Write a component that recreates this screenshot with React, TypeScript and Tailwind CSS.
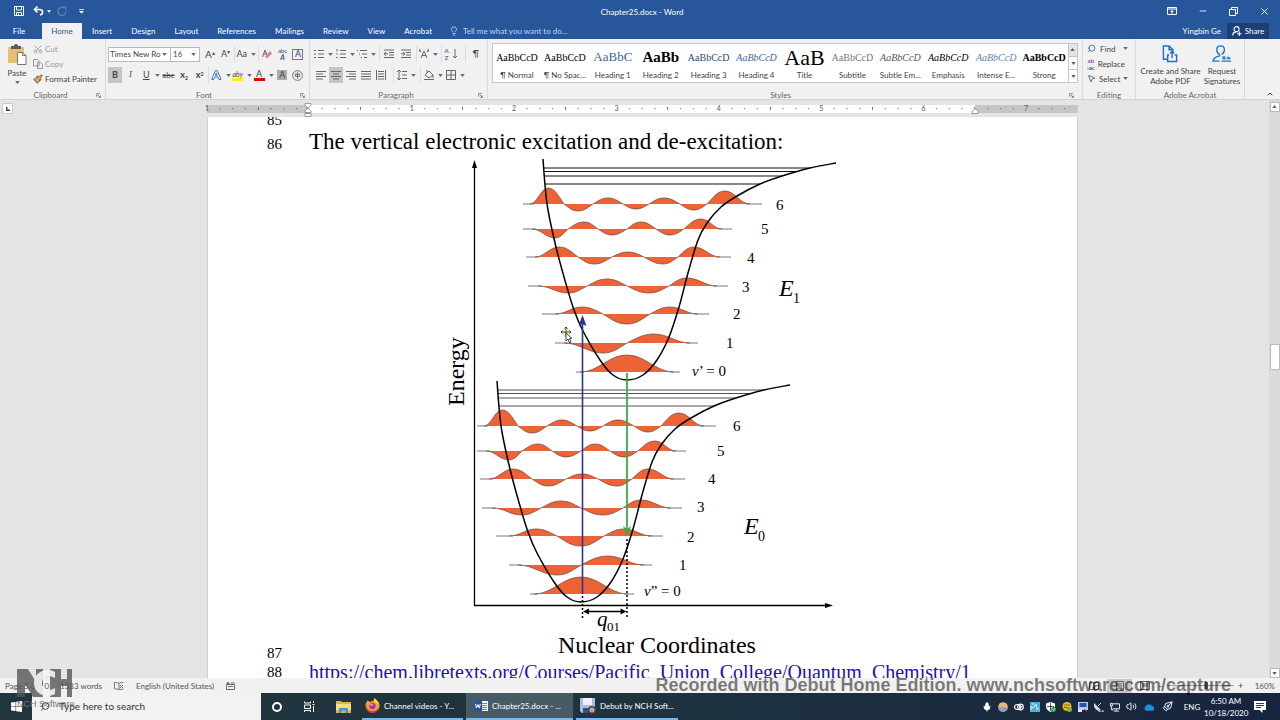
import type { ReactNode } from "react";
import {
  ChevronUp,
  Lightbulb,
  Mic,
  Minus,
  MousePointer2,
  Paintbrush,
  PenTool,
  Scissors,
  Search,
  Volume2,
  X,
} from "lucide-react";

const TABS_AFTER_HOME = [
  "Insert",
  "Design",
  "Layout",
  "References",
  "Mailings",
  "Review",
  "View",
  "Acrobat",
];

const STYLES = [
  { name: "¶ Normal", sample: "AaBbCcD", look: "text-[10px] text-black" },
  { name: "¶ No Spac...", sample: "AaBbCcD", look: "text-[10px] text-black" },
  { name: "Heading 1", sample: "AaBbC", look: "text-[13px] text-[#3d6496]" },
  { name: "Heading 2", sample: "AaBb", look: "text-[15px] font-bold text-black" },
  { name: "Heading 3", sample: "AaBbCcD", look: "text-[10px] text-[#2a4a75]" },
  { name: "Heading 4", sample: "AaBbCcD", look: "text-[10px] italic text-[#3d6496]" },
  { name: "Title", sample: "AaB", look: "text-[22px] text-black" },
  { name: "Subtitle", sample: "AaBbCcD", look: "text-[10px] text-[#777]" },
  { name: "Subtle Em...", sample: "AaBbCcD", look: "text-[10px] italic text-[#555]" },
  { name: "Emphasis", sample: "AaBbCcD", look: "text-[10px] italic text-black" },
  { name: "Intense E...", sample: "AaBbCcD", look: "text-[10px] italic text-[#5b83b5]" },
  { name: "Strong", sample: "AaBbCcD", look: "text-[10px] font-bold text-black" },
];

/* ---------- small pieces ---------- */

const Caret = () => (
  <svg viewBox="0 0 6 4" className="h-[3px] w-[5px] shrink-0" fill="#666">
    <path d="M0 0h6L3 4z" />
  </svg>
);

const Launcher = () => (
  <svg viewBox="0 0 8 8" className="size-[5px]" fill="none" stroke="#666" strokeWidth="1.2">
    <path d="M1 6V1h5M3 3l4 4M7 4v3H4" />
  </svg>
);

const Divider = () => <span className="h-4 w-px bg-[#dcdcdc]" />;

const Tool = ({
  label,
  active,
  children,
}: {
  label: string;
  active?: boolean;
  children: ReactNode;
}) => (
  <button
    type="button"
    aria-label={label}
    className={`flex h-4 min-w-[14px] items-center justify-center gap-1 text-[9px] ${
      active ? "bg-[#c5c5c5]" : ""
    }`}
  >
    {children}
  </button>
);

const Group = ({
  label,
  className,
  launcher,
  children,
}: {
  label: string;
  className: string;
  launcher?: boolean;
  children: ReactNode;
}) => (
  <section
    className={`flex flex-col border-r border-[#dadada] ${className}`}
    aria-label={label}
  >
    <div className="flex-1">{children}</div>
    <div className="flex h-[10px] items-center pt-[2px] pr-1 text-[8px] leading-[10px] text-[#666]">
      <span className="flex-1 text-center">{label}</span>
      {launcher && (
        <button type="button" aria-label={`${label} options`}>
          <Launcher />
        </button>
      )}
    </div>
  </section>
);

const Lines = ({ d }: { d: string }) => (
  <svg viewBox="0 0 10 10" className="size-[10px]" fill="none" stroke="#666" strokeWidth="1">
    <path d={d} />
  </svg>
);

/* ---------- title bar and tabs ---------- */

const TitleBar = () => (
  <header className="flex h-[22px] shrink-0 items-center bg-[#28569a] text-white">
    <div className="flex flex-1 items-center pl-[14px]">
      <button type="button" aria-label="Save">
        <svg viewBox="0 0 10 10" className="size-[10px]" fill="none" stroke="#fff">
          <path d="M.5.5h9v9h-9zM2.5.5v3.500h5v-3.500M2.500 9.500v-3h5v3M4.500 7.500v2" />
        </svg>
      </button>
      <button type="button" aria-label="Undo" className="ml-[9px] flex items-center gap-[3px]">
        <svg viewBox="0 0 11 10" className="h-[10px] w-[11px]" fill="none" stroke="#fff" strokeWidth="1.600">
          <path d="M4.500.5L1.500 3.500l3 3M1.500 3.500h5c4 0 4 5 .5 5.500" />
        </svg>
        <svg viewBox="0 0 6 4" className="h-[3px] w-[4px]" fill="#fff">
          <path d="M0 0h6L3 4z" />
        </svg>
      </button>
      <button type="button" aria-label="Repeat" className="ml-[6px]">
        <svg viewBox="0 0 10 10" className="size-[10px]" fill="none" stroke="#5a80b8" strokeWidth="1.300">
          <path d="M7 2A4 4 0 1 0 9 5.500M5.500 .8h3v3" />
        </svg>
      </button>
      <button type="button" aria-label="Customize toolbar" className="ml-[12px]">
        <svg viewBox="0 0 6 7" className="h-[6px] w-[5px]" fill="#fff">
          <path d="M0 1h6v1H0zM0 3.500h6L3 6.500z" />
        </svg>
      </button>
    </div>
    <h1 className="pt-[2px] text-[8px] leading-none">Chapter25.docx - Word</h1>
    <div className="flex flex-1 items-center justify-end gap-[21px] pr-[10px]">
      <button type="button" aria-label="Ribbon display options">
        <svg viewBox="0 0 10 8" className="h-[8px] w-[10px]" fill="none" stroke="#fff">
          <path d="M.5.5h9v7h-9zM.5 2h9M5 7V3.500M3.500 5L5 3.500 6.500 5" />
        </svg>
      </button>
      <button type="button" aria-label="Minimize">
        <Minus className="size-[10px]" />
      </button>
      <button type="button" aria-label="Restore">
        <svg viewBox="0 0 9 9" className="size-[9px]" fill="none" stroke="#fff">
          <path d="M.5 2.500h6v6h-6zM2.500 2V.5h6v6H7" />
        </svg>
      </button>
      <button type="button" aria-label="Close">
        <X className="size-[11px]" />
      </button>
    </div>
  </header>
);

const Tabs = () => (
  <nav className="flex h-[17px] shrink-0 items-stretch bg-[#28569a] text-[8px] text-white">
    <button type="button" className="mr-[4px] w-[38px]">File</button>
    <button type="button" className="mt-px w-10 bg-[#f1f1f1] text-[#28569a]">Home</button>
    {TABS_AFTER_HOME.map((tab) => (
      <button type="button" key={tab} className="pr-[9px] pl-[10px]">
        {tab}
      </button>
    ))}
    <button type="button" className="ml-2 flex items-center gap-1 text-[#c3d3ea]">
      <Lightbulb className="size-[10px]" />
      Tell me what you want to do...
    </button>
    <div className="flex flex-1 items-center justify-end gap-[6px] pr-[11px]">
      <span>Yingbin Ge</span>
      <button type="button" className="flex h-4 w-[42px] items-center justify-center gap-[3px] bg-[#1a4076]">
        <svg viewBox="0 0 11 11" className="size-[10px]" fill="none" stroke="#fff" strokeWidth="1.200">
          <circle cx="5" cy="3.500" r="2.800" />
          <path d="M.8 10.500c0-2.500 1.500-4 4-4M8 6v5M5.500 8.500h5" />
        </svg>
        Share
      </button>
    </div>
  </nav>
);

/* ---------- ribbon ---------- */

const ClipboardGroup = () => (
  <Group label="Clipboard" className="w-[106px] pl-[5px]" launcher>
    <div className="flex">
      <button type="button" className="flex w-[24px] flex-col items-center gap-[2px] pt-[5px]">
        <svg viewBox="0 0 20 21" className="h-[21px] w-[20px]">
          <path d="M1 3h16v16H1z" fill="#e9bd72" />
          <path d="M4 2h3a2 2 0 0 1 4 0h3v3H4z" fill="#5c5c5c" />
          <path d="M10.500 8.500h5l3.500 3v9h-8.500z" fill="#fff" stroke="#777" />
          <path d="M15.500 8.500v3H19" fill="none" stroke="#777" />
        </svg>
        <span className="leading-[12px]">Paste</span>
        <Caret />
      </button>
      <div className="ml-1 flex flex-col pt-[2px]">
        <button type="button" className="flex h-[15px] items-center gap-[2px] text-[#999]">
          <Scissors className="size-[10px] -rotate-90" />
          Cut
        </button>
        <button type="button" className="flex h-[15px] items-center gap-[2px] text-[#999]">
          <svg viewBox="0 0 10 10" className="size-[10px]" fill="#f1f1f1" stroke="#999">
            <path d="M.5.5h4l1.500 1.500v5H.5zM4.500 3.500h3l2 2v4h-5z" />
          </svg>
          Copy
        </button>
        <button type="button" className="flex h-[15px] items-center gap-[2px] whitespace-nowrap">
          <Paintbrush className="size-[10px] fill-[#e0ab58] text-[#5a4a38]" />
          Format Painter
        </button>
      </div>
    </div>
  </Group>
);

const FontGroup = () => (
  <Group label="Font" className="w-[204px] pl-[2px]" launcher>
    <div className="flex h-[29px] items-center pt-px">
      <label className="flex h-[15px] w-[63px] items-center border border-[#bbb] bg-white pr-[3px]">
        <input aria-label="Font name" defaultValue="Times New Ro" className="w-full min-w-0 pl-[1px] text-[8px] outline-none" />
        <Caret />
      </label>
      <label className="flex h-[15px] w-[29px] items-center border border-l-0 border-[#bbb] bg-white pr-[3px]">
        <input aria-label="Font size" defaultValue="16" className="w-full min-w-0 pl-[2px] text-[8px] outline-none" />
        <Caret />
      </label>
      <div className="flex flex-1 items-center justify-between pr-[4px] pl-[3px]">
        <Tool label="Grow font">
          <span className="text-[10px]">A<sup className="text-[6px] text-[#28569a]">▴</sup></span>
        </Tool>
        <Tool label="Shrink font">
          <span className="text-[9px]">A<sup className="text-[6px] text-[#28569a]">▾</sup></span>
        </Tool>
        <Divider />
        <Tool label="Change case">Aa<Caret /></Tool>
        <Divider />
        <Tool label="Clear formatting">
          <svg viewBox="0 0 10 10" className="size-[10px]">
            <path d="M.5 8L3 1l2 5M1.500 5h3" fill="none" stroke="#666" />
            <path d="M3 7.500L8 2l2 2.500L5 9.500z" fill="#e27f93" />
          </svg>
        </Tool>
        <Tool label="Phonetic guide">
          <span className="flex flex-col items-center text-[6px] leading-[6px]">
            abc
            <b className="text-[7px] leading-[7px] text-[#28569a] italic">A</b>
          </span>
        </Tool>
        <Tool label="Character border">
          <span className="flex size-[11px] items-center justify-center border border-[#5d7eab]">A</span>
        </Tool>
      </div>
    </div>
    <div className="flex h-[14px] items-center justify-between pr-[4px]">
      <Tool label="Bold" active><b>B</b></Tool>
      <Tool label="Italic"><i className="font-serif">I</i></Tool>
      <Tool label="Underline"><u>U</u></Tool>
      <Caret />
      <Tool label="Strikethrough"><s className="text-[8px]">abc</s></Tool>
      <Tool label="Subscript"><b>x<sub className="text-[5px]">2</sub></b></Tool>
      <Tool label="Superscript"><b>x<sup className="text-[5px]">2</sup></b></Tool>
      <Divider />
      <Tool label="Text effects">
        <svg viewBox="0 0 11 10" className="h-[10px] w-[11px]" fill="#fff" stroke="#3d73bd">
          <path d="M.7 9.500L4.300.7h2l3.700 8.800H8L7 7H3.700l-1 2.500zM4.300 5.300h2L5.300 2.800z" />
        </svg>
        <Caret />
      </Tool>
      <Tool label="Highlight">
        <span className="border-b-[3px] border-[#fff200] text-[7px] leading-[8px] italic">aby</span>
        <Caret />
      </Tool>
      <Tool label="Font color">
        <span className="w-[11px] border-b-[3px] border-[#e60000] leading-[8px]">A</span>
        <Caret />
      </Tool>
      <Tool label="Character shading">
        <span className="flex size-[10px] items-center justify-center bg-[#aaa]">A</span>
      </Tool>
      <Tool label="Enclose characters">
        <svg viewBox="0 0 12 12" className="size-[11px]" fill="none" stroke="#666">
          <circle cx="6" cy="6" r="5.300" />
          <path d="M3 4.500h6M6 2.500v7M3.500 7h5M4 4.500v2M8 4.500v2" />
        </svg>
      </Tool>
    </div>
  </Group>
);

const ParagraphGroup = () => (
  <Group label="Paragraph" className="w-[178px] pl-1" launcher>
    <div className="flex h-[29px] items-center justify-between pt-px pr-1">
      <Tool label="Bullets"><Lines d="M0 1.500h2M0 5h2M0 8.500h2M4 1.500h6M4 5h6M4 8.500h6" /><Caret /></Tool>
      <Tool label="Numbering"><Lines d="M1 0v2.500M0 5h1.500M0 8.500h1.500M4 1.500h6M4 5h6M4 8.500h6" /><Caret /></Tool>
      <Tool label="Multilevel list"><Lines d="M0 1.500h1M3 1.500h7M2 5h1M5 5h5M4 8.500h1M7 8.500h3" /><Caret /></Tool>
      <Divider />
      <Tool label="Decrease indent"><Lines d="M0 1h10M5 3.500h5M5 6h5M0 8.500h10M4 4.800H0M2 3L0 4.800l2 2" /></Tool>
      <Tool label="Increase indent"><Lines d="M0 1h10M5 3.500h5M5 6h5M0 8.500h10M0 4.800h4M2 3l2 1.800-2 2" /></Tool>
      <Divider />
      <Tool label="Asian layout"><Lines d="M2 9L5 2l3 7M3 6.500h4M0 1l2 2M10 1L8 3M0 3V1h2M10 3V1H8" /><Caret /></Tool>
      <Divider />
      <Tool label="Sort">
        <span className="flex flex-col text-[6px] leading-[7px] font-bold">
          <span className="text-[#3d73bd]">A</span>
          <span className="text-[#8a5a9c]">Z</span>
        </span>
        <Lines d="M2 0v9M0 7l2 2 2-2" />
      </Tool>
      <Divider />
      <Tool label="Show marks">¶</Tool>
    </div>
    <div className="flex h-[14px] items-center gap-[1px] pr-[22px]">
      <Tool label="Align left"><Lines d="M0 1.500h10M0 4h7M0 6.500h10M0 9h7" /></Tool>
      <Tool label="Center" active><Lines d="M0 1.500h10M2 4h6M0 6.500h10M2 9h6" /></Tool>
      <Tool label="Align right"><Lines d="M0 1.500h10M3 4h7M0 6.500h10M3 9h7" /></Tool>
      <Tool label="Justify"><Lines d="M0 1.500h10M0 4h10M0 6.500h10M0 9h10" /></Tool>
      <Tool label="Distribute"><Lines d="M.5 0v10M9.500 0v10M2 1.500h6M2 4h6M2 6.500h6M2 9h6" /></Tool>
      <div className="flex flex-1 items-center justify-between pl-1">
        <Divider />
        <Tool label="Line spacing"><Lines d="M2 0v10M0 2l2-2 2 2M0 8l2 2 2-2M5 1.500h5M5 5h5M5 8.500h5" /><Caret /></Tool>
        <Divider />
        <Tool label="Shading"><Lines d="M1 5l4-4 4 4-4 3zM3 3V0M9 5v3M0 9.500h10" /><Caret /></Tool>
        <Tool label="Borders"><Lines d="M.5.5h9v9h-9zM5 0v10M0 5h10" /><Caret /></Tool>
      </div>
    </div>
  </Group>
);

const StylesGroup = () => (
  <Group label="Styles" className="min-w-0 flex-1 px-1" launcher>
    <div className="mt-1 flex h-10 border border-[#c6c6c6] bg-white">
      {STYLES.map((style) => (
        <button
          type="button"
          key={style.name}
          className="flex min-w-0 flex-1 flex-col items-center px-[2px] whitespace-nowrap"
        >
          <span
            className={`flex h-[26px] items-center font-['Liberation_Serif',serif] ${style.look}`}
          >
            {style.sample}
          </span>
          <span className="text-[8px] leading-[10px]">{style.name}</span>
        </button>
      ))}
      <div className="flex w-[9px] shrink-0 flex-col border-l border-[#c6c6c6]">
        <button type="button" aria-label="Scroll styles up" className="flex flex-1 rotate-180 items-center justify-center bg-[#e4e4e4]"><Caret /></button>
        <button type="button" aria-label="Scroll styles down" className="flex flex-1 items-center justify-center border-y border-[#c6c6c6]"><Caret /></button>
        <button type="button" aria-label="More styles" className="flex flex-1 items-center justify-center"><Caret /></button>
      </div>
    </div>
  </Group>
);

const EditingGroup = () => (
  <Group label="Editing" className="w-[53px] pl-1">
    <div className="flex flex-col pt-[2px]">
      <button type="button" className="flex h-[15px] items-center gap-1">
        <Search className="size-[9px] -scale-x-100 text-[#28569a]" />
        Find
        <span className="ml-1"><Caret /></span>
      </button>
      <button type="button" className="flex h-[15px] items-center gap-[3px]">
        <span className="flex flex-col text-[6px] leading-[7px] font-bold">
          <span className="text-[#8a5a9c]">ab</span>
          <span className="text-[#28569a]">›ac</span>
        </span>
        Replace
      </button>
      <button type="button" className="flex h-[15px] items-center gap-[3px]">
        <MousePointer2 className="size-[9px]" />
        Select
        <Caret />
      </button>
    </div>
  </Group>
);

const AcrobatGroup = () => (
  <Group label="Adobe Acrobat" className="w-[109px] pl-1">
    <div className="flex gap-[2px] leading-[10px]">
      <button type="button" className="flex w-[61px] flex-col items-center pt-[6px] whitespace-nowrap">
        <svg viewBox="0 0 17 19" className="mb-[3px] h-[18px] w-[17px]" fill="none" stroke="#1b72c8" strokeWidth="1.500">
          <path d="M5 15H1V1h6l4 4v3M7 1v4h4M7 10.500H5.500v7H15v-7h-2M10.200 14V7M8 9l2.200-2.200L12.500 9" />
        </svg>
        Create and Share
        <br />
        Adobe PDF
      </button>
      <button type="button" className="flex w-[38px] flex-col items-center pt-[6px]">
        <svg viewBox="0 0 21 19" className="mb-[3px] h-[18px] w-[20px]" fill="none" stroke="#1b72c8" strokeWidth="1.400">
          <path d="M8 10c-2-1-3-3-3-5 0-2.500 1.500-4 4-4s4 1.500 4 4c0 2-1 4-3 5M8 10v1.500c-4 1-7 2-7 5.500h7M10 17h10M11 12l3 3M14 12l-3 3M15.500 14.500l1.500-1.500 1 1.500 1.500-1" />
        </svg>
        Request
        <br />
        Signatures
      </button>
    </div>
  </Group>
);

const Ribbon = () => (
  <div className="flex h-[61px] shrink-0 border-b border-[#d2d2d2] bg-[#f1f1f1] text-[8px] text-[#444]">
    <ClipboardGroup />
    <FontGroup />
    <ParagraphGroup />
    <StylesGroup />
    <EditingGroup />
    <AcrobatGroup />
    <div className="flex w-[35px] items-end justify-center pb-[1px] pl-[14px]">
      <button type="button" aria-label="Collapse the ribbon">
        <ChevronUp className="size-[8px]" strokeWidth={3} />
      </button>
    </div>
  </div>
);

/* ---------- ruler ---------- */

const RULER_TICKS = Array.from({ length: 69 }, (_, i) => i);

const tickMark = (i: number) => {
  if (i % 8 === 0) return i === 8 || i === 68 ? "" : String(Math.abs(i / 8 - 1));
  if (i === 68) return "";
  return i % 4 === 0 ? <i className="h-[3px] w-px shrink-0 bg-[#777]" /> : "·";
};

const Ruler = () => (
  <div className="flex h-[17px] shrink-0 items-center">
    <div className="w-4 pl-[2px]">
      <button
        type="button"
        aria-label="Tab selector"
        className="flex size-[11px] items-center justify-center border border-[#ccc] bg-white"
      >
        <svg viewBox="0 0 4 4" className="size-1" fill="none" stroke="#444" strokeWidth="1.500">
          <path d="M.7 0v3.300H4" />
        </svg>
      </button>
    </div>
    <div className="flex flex-1 justify-center">
      <div className="relative flex h-2 w-[871px] bg-[linear-gradient(90deg,#c6c6c6_102px,#fff_102px,#fff_768px,#c6c6c6_768px)]">
        <div className="flex flex-1 items-center justify-between text-[7px] leading-none text-[#555]">
          {RULER_TICKS.map((i) => (
            <span key={i} className="flex w-0 justify-center">{tickMark(i)}</span>
          ))}
        </div>
        <svg viewBox="0 0 8 14" className="absolute -top-[2px] left-[97px] h-[14px] w-2" fill="#fff" stroke="#999">
          <path d="M1 .5h6v2L4 5 1 2.500zM4 5l3 3v1.500H1V8zM1 10.500h6v3H1z" />
        </svg>
        <svg viewBox="0 0 8 6" className="absolute top-[3px] left-[764px] h-[6px] w-2" fill="#fff" stroke="#999">
          <path d="M4 .5l3 3v2H1v-2z" />
        </svg>
      </div>
    </div>
  </div>
);

/* ---------- energy diagram ---------- */

type Level = {
  y: number;
  line: [number, number];
  // alternating node x and extremum [x, offset], starting and ending on a node
  nodes: number[];
  peaks: [number, number][];
};

const LEVELS: Level[] = [
  { y: 372, line: [576, 680], nodes: [580, 674], peaks: [[627, -17]] },
  { y: 343, line: [555, 698], nodes: [564, 627, 690], peaks: [[603, 10], [654, -9]] },
  { y: 314, line: [542, 709], nodes: [555, 603, 650, 698], peaks: [[582, -7], [627, 10], [670, -7]] },
  { y: 286, line: [528, 728], nodes: [538, 587, 627, 669, 717], peaks: [[568, 7], [607, -7], [649, 7], [687, -8]] },
  { y: 257, line: [526, 731], nodes: [535, 578, 612, 644, 678, 720], peaks: [[559, -10], [594, 7], [628, -5], [663, 7], [694, -10]] },
  { y: 229, line: [523, 732], nodes: [532, 568, 598, 627, 656, 684, 722], peaks: [[555, 9], [584, -7], [612, 6], [641, -7], [670, 6], [701, -10]] },
  { y: 204, line: [523, 762], nodes: [530, 564, 593, 623, 649, 680, 707, 750], peaks: [[548, -16], [578, 7], [608, -6], [636, 5], [664, -6], [694, 6], [725, -13]] },
];

const wavePath = ({ y, nodes, peaks }: Level) => {
  let d = `M${nodes[0]} ${y}`;
  peaks.forEach(([px, h], i) => {
    const a = nodes[i];
    const b = nodes[i + 1];
    const left = px - a;
    const right = b - px;
    // outer lobes fade out along the level line, inner ones cross it
    const rise = i === 0 ? 0 : h * 0.6;
    const fall = i === peaks.length - 1 ? 0 : h * 0.6;
    d += `C${a + left * 0.4} ${y + rise} ${px - left * 0.4} ${y + h} ${px} ${y + h}`;
    d += `C${px + right * 0.4} ${y + h} ${b - right * 0.4} ${y + fall} ${b} ${y}`;
  });
  return d;
};

const WELL: [number, number][] = [
  [543, 159], [545, 185], [548, 210], [556, 247], [566, 284], [574, 310], [583, 331],
  [600, 360], [613, 375], [627, 380], [643, 375], [657, 360], [669, 337], [679, 307],
  [688, 273], [698, 240], [707, 223], [721, 207], [737, 196], [760, 184], [782, 176],
  [810, 168], [836, 163],
];

const smooth = (pts: [number, number][]) =>
  pts.slice(1).reduce((d, p, i) => {
    const p0 = pts[i - 1] ?? pts[i];
    const p1 = pts[i];
    const p3 = pts[i + 2] ?? p;
    return `${d}C${p1[0] + (p[0] - p0[0]) / 6} ${p1[1] + (p[1] - p0[1]) / 6} ${
      p[0] - (p3[0] - p1[0]) / 6
    } ${p[1] - (p3[1] - p1[1]) / 6} ${p[0]} ${p[1]}`;
  }, `M${pts[0][0]} ${pts[0][1]}`);

const Well = ({ limitColor }: { limitColor: string }) => (
  <>
    <path
      d="M544 168H810M544 171.500H798M544 176H782M545 184H760"
      fill="none"
      stroke={limitColor}
    />
    {LEVELS.map((level) => (
      <g key={level.y}>
        <path
          d={`M${level.line[0]} ${level.y}H${level.nodes[0] + 4}M${
            level.nodes[level.nodes.length - 1] - 4
          } ${level.y}H${level.line[1]}`}
          stroke="#555"
          strokeWidth="0.800"
        />
        <path d={`${wavePath(level)}Z`} fill="#ee6336" />
        <path d={wavePath(level)} fill="none" stroke="#664438" strokeWidth="0.700" />
      </g>
    ))}
    <path d={smooth(WELL)} fill="none" stroke="#000" strokeWidth="1.500" />
  </>
);

const LABELS: [string, number, number][] = [
  ["6", 776, 210], ["5", 761, 234], ["4", 747, 263], ["3", 742, 292], ["2", 733, 319], ["1", 726, 348],
  ["6", 733, 431], ["5", 717, 456], ["4", 708, 484], ["3", 697, 512], ["2", 687, 542], ["1", 679, 570],
];

const EnergyDiagram = () => (
  <svg
    viewBox="440 155 410 505"
    className="h-[505px] w-[410px] font-['Liberation_Serif',serif]"
    role="img"
    aria-label="Vertical electronic excitation and de-excitation"
  >
    <path d="M474.500 164V605.500H828" fill="none" stroke="#000" strokeWidth="1.300" />
    <path d="M474.500 160l2.500 8h-5zM833 605.500l-8 2.500v-5z" />
    <Well limitColor="#111" />
    <g transform="translate(-46 222)">
      <Well limitColor="#555060" />
    </g>
    <path d="M582.500 594V318" stroke="#2b3590" strokeWidth="1.600" />
    <path d="M582.500 315l4 11-4-2-4 2z" fill="#2b3590" />
    <path d="M627 373v160" stroke="#3aab47" strokeWidth="1.800" />
    <path d="M627 537l-4-11 4 3 4-3z" fill="#3aab47" />
    <path d="M582.500 596v22M627 539v79" stroke="#000" strokeWidth="1.500" strokeDasharray="2 2" />
    <path d="M586 611.500h38" stroke="#000" strokeWidth="1.500" />
    <path d="M583 611.500l6-3v6zM626.500 611.500l-6-3v6z" />
    <g fontSize="15">
      {LABELS.map(([text, x, y]) => (
        <text key={`${x}-${y}`} x={x} y={y}>{text}</text>
      ))}
      <text x="692" y="376"><tspan fontStyle="italic">v</tspan>’ = 0</text>
      <text x="644" y="596"><tspan fontStyle="italic">v</tspan>” = 0</text>
    </g>
    <g fontSize="24" fontStyle="italic">
      <text x="779" y="296">E</text>
      <text x="744" y="534">E</text>
      <text x="597" y="626" fontSize="21">q</text>
    </g>
    <g fontSize="14">
      <text x="793" y="303">1</text>
      <text x="758" y="541">0</text>
      <text x="607" y="631" fontSize="13">01</text>
    </g>
    <text transform="translate(464 406) rotate(-90)" fontSize="24">Energy</text>
    <text x="558" y="653" fontSize="24">Nuclear Coordinates</text>
    <g stroke="#333" fill="#fff" strokeWidth="0.900">
      <circle cx="566" cy="332" r="4.500" fill="#f4f0c4" stroke="none" />
      <path d="M561 332h10M566 327v10M562.500 330.500l-1.500 1.500 1.500 1.500M569.500 330.500l1.500 1.500-1.500 1.500M564.500 328.500l1.500-1.500 1.500 1.500" fill="none" />
      <path d="M566 333v8l2-2 1.500 4 1.500-.7-1.500-3.800h2.500z" />
    </g>
  </svg>
);

/* ---------- document ---------- */

const Line = ({
  n,
  className,
  children,
}: {
  n: number;
  className: string;
  children?: ReactNode;
}) => (
  <div className={`flex ${className}`}>
    <span className="w-[42px] shrink-0 text-[15px] leading-[14px]">{n}</span>
    {children}
  </div>
);

const DocumentPage = () => (
  <div className="flex min-h-0 flex-1 justify-center overflow-hidden pl-4">
    <article className="w-[871px] border-x border-[#d0d0d0] bg-white pl-[59px] font-['Liberation_Serif',serif] text-black">
      <Line n={85} className="h-[10px] items-end overflow-hidden" />
      <Line n={86} className="h-7 items-baseline">
        <p className="text-[23px] leading-[30px]">
          The vertical electronic excitation and de-excitation:
        </p>
      </Line>
      <Line n={87} className="items-end">
        <div className="pl-[131px]">
          <EnergyDiagram />
        </div>
      </Line>
      <Line n={88} className="h-6 items-center">
        <a
          href="https://chem.libretexts.org/Courses/Pacific_Union_College/Quantum_Chemistry/1"
          className="text-[20px] whitespace-nowrap text-[#1a10b8]"
        >
          https://chem.libretexts.org/Courses/Pacific_Union_College/Quantum_Chemistry/1
        </a>
      </Line>
    </article>
  </div>
);

const ScrollBar = () => (
  <div className="flex w-[11px] flex-col items-center bg-[#dadada] pt-[2px]">
    <button type="button" aria-label="Scroll up" className="flex size-[10px] rotate-180 items-center justify-center border border-[#bbb] bg-white"><Caret /></button>
    <div className="flex-[231]" />
    <div className="h-[26px] w-[10px] border border-[#bbb] bg-white" />
    <div className="flex-[297]" />
    <button type="button" aria-label="Scroll down" className="flex size-[10px] items-center justify-center border border-[#bbb] bg-white"><Caret /></button>
  </div>
);

/* ---------- status bar and task bar ---------- */

const StatusBar = () => (
  <footer className="flex h-[15px] shrink-0 items-center bg-[#f1f1f1] pr-[5px] pl-[5px] text-[8px] text-[#555]">
    <span className="w-[55px]">Page 5 of 10</span>
    <span>1333 words</span>
    <svg viewBox="0 0 10 8" className="ml-3 h-2 w-[10px]" fill="none" stroke="#777">
      <path d="M5 1.500C4 .5 2 .5.5.5v6.500c1.500 0 3.500 0 4.500.7V1.500M5 1.500c1-1 2-1 4.500-1M6 3l3 3M9 3L6 6M5 7.700l4.500-.7" />
    </svg>
    <span className="ml-3">English (United States)</span>
    <svg viewBox="0 0 9 8" className="ml-3 h-2 w-[9px]" fill="none" stroke="#666">
      <path d="M.5 2.500h8v5h-8zM2 4.500h5M5 1h3.500" />
      <circle cx="2" cy="1.500" r="1" fill="#666" />
    </svg>
    <div className="flex flex-1 items-center justify-end">
      <button type="button" aria-label="Read mode" className="px-2"><Lines d="M.5 1.500h4v7h-4zM5.500 1.500h4v7h-4z" /></button>
      <button type="button" aria-label="Print layout" className="flex h-[14px] w-[25px] items-center justify-center bg-[#c8c8c8]"><Lines d="M1.500.5h7v9h-7zM3 3h4M3 5h4M3 7h4" /></button>
      <button type="button" aria-label="Web layout" className="px-2"><Lines d="M.5.5h9v8h-9zM2 3h6M2 5h6" /></button>
      <button type="button" aria-label="Zoom out">−</button>
      <input type="range" aria-label="Zoom" min={10} max={210} defaultValue={128} className="mx-1 h-[7px] w-[67px] appearance-none bg-[linear-gradient(#999,#999)] bg-[length:100%_1px] bg-center bg-no-repeat [&::-webkit-slider-thumb]:h-[7px] [&::-webkit-slider-thumb]:w-[3px] [&::-webkit-slider-thumb]:appearance-none [&::-webkit-slider-thumb]:bg-[#555]" />
      <button type="button" aria-label="Zoom in" className="text-[10px]">+</button>
      <span className="ml-[11px]">160%</span>
    </div>
  </footer>
);

const TaskButton = ({
  label,
  className,
  icon,
}: {
  label: string;
  className: string;
  icon: ReactNode;
}) => (
  <button
    type="button"
    className={`mr-[3px] flex h-full items-center gap-1 border-b-2 border-[#76b9ed] whitespace-nowrap ${className}`}
  >
    {icon}
    {label}
  </button>
);

const Tray = () => (
  <div className="flex items-center gap-[6px]">
    <Mic className="size-[10px] fill-white" />
    <svg viewBox="0 0 10 10" className="size-[10px]"><circle cx="5" cy="5" r="4.800" fill="#e8b777" /><path d="M.3 6a4.800 4.800 0 0 0 9.400 0Q5 4 .3 6z" fill="#8e9fc4" /></svg>
    <svg viewBox="0 0 10 10" className="size-[10px]" fill="none" stroke="#fff" strokeWidth="1.200"><ellipse cx="3.500" cy="5" rx="3" ry="2.500" /><circle cx="6.500" cy="5" r="2.800" /><circle cx="6.500" cy="5" r=".8" /></svg>
    <svg viewBox="0 0 10 10" className="size-[10px]"><path d="M0 0h10v10H0z" fill="#53abd8" /><path d="M1 8V4l2 2 3-4 1 5h2M2 2h2" fill="none" stroke="#d7f0fb" /></svg>
    <svg viewBox="0 0 10 10" className="size-[10px]"><path d="M4.500 0L9 1.500v3C9 7 7 9 4.500 10 2 9 0 7 0 4.500v-3z" fill="#fff" /><path d="M4.500 1v8M1 4.500h7" stroke="#17243c" strokeWidth=".8" /><circle cx="7.500" cy="7.500" r="2.500" fill="#27a052" /><path d="M6.300 7.500l1 1 1.500-2" fill="none" stroke="#fff" strokeWidth=".7" /></svg>
    <svg viewBox="0 0 10 10" className="size-[10px]"><circle cx="5" cy="4.500" r="4.500" fill="#e9b730" /><path d="M2 3h6M2 5.500h4" stroke="#8c6712" /><circle cx="7.500" cy="7.500" r="2.500" fill="#7ab83a" /></svg>
    <svg viewBox="0 0 10 10" className="size-[10px]"><path d="M0 0h10v8H0z" fill="#b9c8e8" /><path d="M1.500 1h7v4h-7z" fill="#2a4fae" /><path d="M2 7h2v3H0V8z" fill="#dfe6f5" /><path d="M6 7l3 3" stroke="#c33" /></svg>
    <svg viewBox="0 0 10 10" className="size-[10px]"><path d="M0 1l7 7c-4 2-8-2-7-7z" fill="#ddd" /><path d="M4 4l3-3M5 8v2h4V8" stroke="#ddd" fill="none" /></svg>
    <svg viewBox="0 0 11 10" className="size-[10px]" fill="none" stroke="#fff"><path d="M3 1.500h7.500v5.500H3M7 7v2M4 9.500h6M.5 1h2v3h-2zM1.500 4v4h2" /></svg>
    <Volume2 className="size-[11px]" />
    <svg viewBox="0 0 12 8" className="h-[8px] w-[11px]"><path d="M3 8a3 3 0 0 1 0-5 4 4 0 0 1 7 0 2.500 2.500 0 0 1 0 5z" fill="#1c8fe0" /></svg>
    <PenTool className="ml-[2px] size-[11px] rotate-90" />
  </div>
);

const TaskBar = () => (
  <div className="flex h-[27px] shrink-0 items-center bg-[linear-gradient(90deg,#22363f,#1f333f_50%,#17243f)] text-[8px] text-white">
    <button type="button" aria-label="Start" className="flex h-full w-8 items-center justify-center">
      <svg viewBox="0 0 12 12" className="size-[11px]" fill="#fff">
        <path d="M0 1.700l5-.7v4.700H0zM5.600.9L12 0v5.700H5.600zM0 6.300h5V11l-5-.7zM5.600 6.300H12V12l-6.400-.9z" />
      </svg>
    </button>
    <label className="flex h-full w-[229px] items-center gap-[9px] bg-[#f2f2f2] pl-2 text-[#222]">
      <Search className="size-[11px] -scale-x-100" />
      <input aria-label="Search" placeholder="Type here to search" className="w-full text-[10px] outline-none placeholder:text-[#333]" />
    </label>
    <button type="button" aria-label="Cortana" className="flex w-8 justify-center">
      <span className="size-[10px] rounded-full border-2 border-white" />
    </button>
    <button type="button" aria-label="Task view" className="flex w-8 justify-center">
      <svg viewBox="0 0 11 11" className="size-[11px]" fill="none" stroke="#fff">
        <path d="M.5.5v1.500h6V.5M.5 4h6v3.500h-6zM.5 11V9.500h6V11M9.500 0v2M9.500 5v6M8.500 3.500h2" />
      </svg>
    </button>
    <button type="button" aria-label="File Explorer" className="flex w-[37px] justify-center">
      <svg viewBox="0 0 15 13" className="h-[13px] w-[15px]">
        <path d="M0 1h5l1 1h9v11H0z" fill="#e8b240" />
        <path d="M0 4h15v6H0z" fill="#fbdc83" />
        <path d="M3 13V8h9v5H9.500v-2.500h-4V13z" fill="#3c98d8" />
      </svg>
    </button>
    <TaskButton
      label="Channel videos - Y..."
      className="w-[101px] pl-[3px]"
      icon={
        <svg viewBox="0 0 16 16" className="size-[15px] shrink-0">
          <path d="M10 0c2 2 5 4 5.500 8A7.500 7.500 0 0 1 .5 8.500C.5 6 1.500 4 3 2.500c.5 1 1 1.500 2 1.500 2 0 5-1 5-4z" fill="#ff9a2b" />
          <path d="M10 0c2 2 5 4 5.500 8-1-2-3-3-5-3.500C9 4 10 2 10 0z" fill="#ffd93b" />
          <path d="M1 6c0 5 3 8 7 8s5-2 6-3c0 3-3 5-6 5C4 16 0 12 1 6z" fill="#e8294c" />
          <circle cx="8" cy="8.500" r="3.300" fill="#8a35d0" />
          <path d="M5 6l4 1-2 2z" fill="#ffb52e" />
        </svg>
      }
    />
    <TaskButton
      label="Chapter25.docx - ..."
      className="w-[107px] bg-[#475b67] pl-2"
      icon={
        <svg viewBox="0 0 14 12" className="h-[12px] w-[14px] shrink-0">
          <path d="M6 1h8v10H6z" fill="#fff" />
          <path d="M8 3.500h5M8 5.500h5M8 7.500h5M8 9.500h5" stroke="#3d6ab0" strokeWidth=".8" />
          <path d="M0 1l8-1v12l-8-1z" fill="#28569a" />
          <path d="M1.500 4l1 4L4 4.500 5.300 8l1-4" fill="none" stroke="#fff" />
        </svg>
      }
    />
    <TaskButton
      label="Debut by NCH Soft..."
      className="w-[102px] pl-1"
      icon={
        <svg viewBox="0 0 16 16" className="size-4 shrink-0">
          <path d="M0 0h15v15H2l-2-2z" fill="#a9bce0" />
          <path d="M3 0h9v7H3z" fill="#eef3fb" />
          <path d="M3 10h8v5H3z" fill="#3a4f7c" />
          <circle cx="12" cy="12" r="4" fill="#444" />
          <circle cx="12" cy="12" r="2.500" fill="#b9a9a0" />
        </svg>
      }
    />
    <div className="flex-1" />
    <Tray />
    <span className="ml-[7px] w-6 text-center">ENG</span>
    <div className="w-[44px] text-center leading-[12px] whitespace-nowrap">
      <p>6:50 AM</p>
      <p>10/18/2020</p>
    </div>
    <button type="button" aria-label="Notifications" className="mr-[14px] ml-[6px]">
      <svg viewBox="0 0 12 12" className="size-[12px]">
        <path d="M0 0h12v9H8.500v3L5.500 9H0z" fill="#fff" />
        <path d="M2 2.500h8M2 4.500h8M2 6.500h5" stroke="#17243f" strokeWidth=".9" />
      </svg>
    </button>
  </div>
);

/* ---------- recorder watermark ---------- */

const Watermark = () => (
  <div className="pointer-events-none absolute inset-x-0 bottom-0 font-['Liberation_Sans',sans-serif]">
    <div className="absolute bottom-[9px] left-[17px] text-[#777]">
      <svg viewBox="0 0 57 28" className="h-[28px] w-[57px]">
        <path d="M0 0h11l8 13V0h7v28H16L8 15v13H0zM33 0h11v10h6V0h5v28h-5V17h-6v11H33z" fill="#555" fillOpacity=".8" />
        <path d="M38 3C29-2 17 3 17 14s12 16 21 11v-6c-6 4-13 1-13-5s7-9 13-5z" fill="#f4f4f4" fillOpacity=".9" />
      </svg>
      <p className="text-[9px] leading-[14px] whitespace-nowrap">NCH Software</p>
    </div>
    <p className="absolute right-[49px] bottom-[24px] text-[18px] leading-[22px] font-bold whitespace-nowrap text-black/50">
      Recorded with Debut Home Edition. www.nchsoftware.com/capture
    </p>
  </div>
);

export default function App() {
  return (
    <div className="relative flex h-screen flex-col overflow-hidden bg-[#e4e4e4] font-['Lato','Open_Sans',sans-serif]">
      <TitleBar />
      <Tabs />
      <Ribbon />
      <main className="flex min-h-0 flex-1">
        <div className="flex min-w-0 flex-1 flex-col">
          <Ruler />
          <DocumentPage />
        </div>
        <ScrollBar />
      </main>
      <StatusBar />
      <TaskBar />
      <Watermark />
    </div>
  );
}
